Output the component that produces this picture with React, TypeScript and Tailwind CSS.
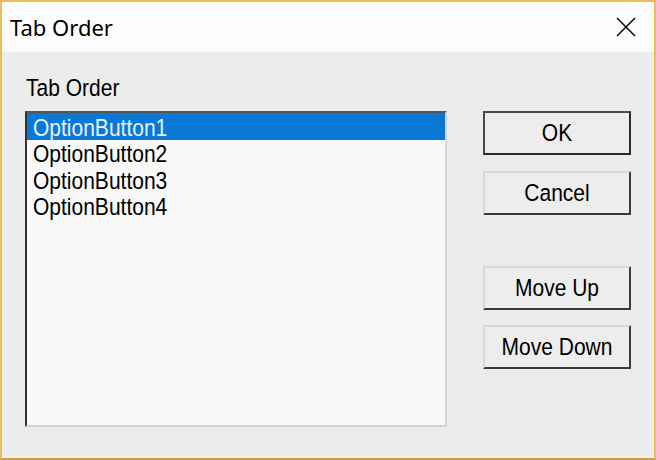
import React from "react"

const items = ["OptionButton1", "OptionButton2", "OptionButton3", "OptionButton4"]

function DlgButton({ label, isDefault }: { label: string; isDefault?: boolean }) {
  return (
    <button
      className={`w-[148px] h-[44px] flex items-center justify-center bg-[#ededed] text-[21px] text-black border-2 ${
        isDefault
          ? "border-[#4a4a4a] border-b-[#2a2a2a] border-r-[#2a2a2a]"
          : "border-t-[#d8d8d8] border-l-[#d8d8d8] border-b-[#3a3a3a] border-r-[#3a3a3a]"
      }`}
      style={{ fontFamily: '"Liberation Sans", Arial, sans-serif' }}
    >
      <span className="inline-block scale-y-[1.15]">{label}</span>
    </button>
  )
}

export default function App() {
  return (
    <div className="w-[656px] h-[460px] flex flex-col border-2 border-[#e9bf57] border-b-[#c9a044] bg-[#ececec]">
      {/* title bar */}
      <div className="h-[50px] flex items-center justify-between bg-[#fcfcfc] pl-[8px] pr-[18px]">
        <span className="text-[22px] text-black" style={{ fontFamily: '"Noto Sans", sans-serif' }}>
          Tab Order
        </span>
        <svg width="20" height="20" viewBox="0 0 20 20">
          <path d="M1 1 L19 19 M19 1 L1 19" stroke="#111" strokeWidth="1.6" fill="none" />
        </svg>
      </div>

      {/* body */}
      <div
        className="flex-1 flex pl-[23px] pt-[24px]"
        style={{ fontFamily: '"Liberation Sans", Arial, sans-serif' }}
      >
        <div className="flex flex-col">
          <div className="h-[24px] leading-[24px] text-[21px] text-black mb-[11px] pl-[1px]">
            <span className="inline-block scale-y-[1.15]">Tab Order</span>
          </div>
          <div className="w-[422px] h-[316px] bg-[#f8f8f8] border-2 border-t-[#555] border-l-[#333] border-b-[#d4d4d4] border-r-[#d4d4d4]">
            {items.map((item, i) => (
              <div
                key={item}
                className={`pl-[6px] pt-[2px] text-[21px] ${
                  i === 0 ? "h-[27px] leading-[25px] bg-[#0a78d4] text-[#e6f2ff]" : "h-[26.5px] leading-[24px] text-black"
                }`}
              >
                <span className="inline-block scale-y-[1.15]">{item}</span>
              </div>
            ))}
          </div>
        </div>

        <div className="flex flex-col ml-[36px] mt-[35px]">
          <DlgButton label="OK" isDefault />
          <div className="mt-[16px]">
            <DlgButton label="Cancel" />
          </div>
          <div className="mt-[51px]">
            <DlgButton label="Move Up" />
          </div>
          <div className="mt-[15px]">
            <DlgButton label="Move Down" />
          </div>
        </div>
      </div>
    </div>
  )
}
